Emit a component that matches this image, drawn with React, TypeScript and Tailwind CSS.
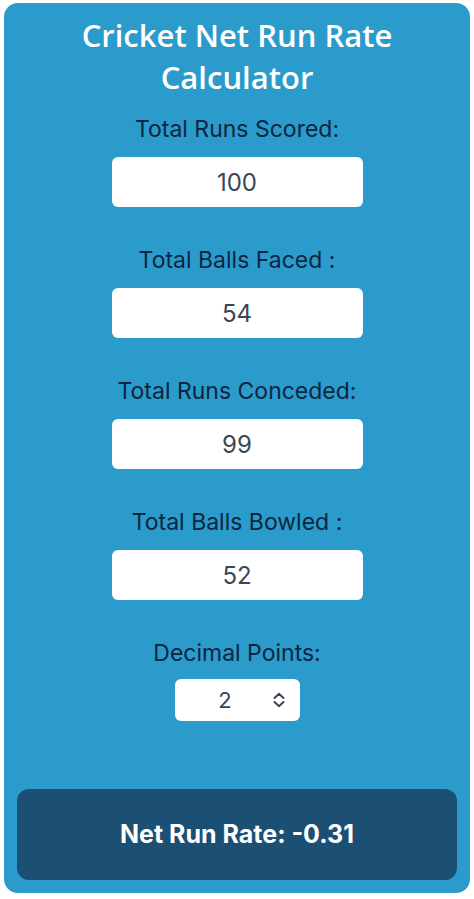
import { useState } from 'react'

const LABEL = 'text-[23px] leading-[28px] text-[#0d2640] text-center'
const INPUT =
  'w-[251px] h-[50px] rounded-[6px] bg-white text-center text-[24px] text-[#3b4658] outline-none'

function Field({ label, value, onChange }: { label: string; value: string; onChange: (v: string) => void }) {
  return (
    <div className="flex flex-col items-center gap-[14px]">
      <label className={LABEL}>{label}</label>
      <input type="text" inputMode="numeric" value={value} onChange={(e) => onChange(e.target.value)} className={INPUT} />
    </div>
  )
}

export default function App() {
  const [runs, setRuns] = useState('100')
  const [balls, setBalls] = useState('54')
  const [conceded, setConceded] = useState('99')
  const [bowled, setBowled] = useState('52')
  const [decimals, setDecimals] = useState('2')

  const r = Number(runs), b = Number(balls), c = Number(conceded), w = Number(bowled)
  const nrr = b > 0 && w > 0 ? (r / b) * 6 - (c / w) * 6 : 0
  // 100/54*6 = 11.11, 99/52*6 = 11.42
  const shown = nrr.toFixed(Number(decimals))

  return (
    <div className="min-h-screen bg-white px-[4px] pt-[3px] pb-[6px]" style={{ fontFamily: 'Inter, "Noto Sans", sans-serif' }}>
      <div className="h-[890px] rounded-[14px] bg-[#2a9bcb] px-[13px] pt-[11px] pb-[13px] flex flex-col">
        <h1
          className="text-center text-white text-[31px] leading-[42px] font-semibold px-[50px]"
          style={{ fontFamily: '"Open Sans", sans-serif' }}
        >
          Cricket Net Run Rate Calculator
        </h1>

        <div className="mt-[17px] flex flex-col gap-[39px]">
          <Field label="Total Runs Scored:" value={runs} onChange={setRuns} />
          <Field label="Total Balls Faced :" value={balls} onChange={setBalls} />
          <Field label="Total Runs Conceded:" value={conceded} onChange={setConceded} />
          <Field label="Total Balls Bowled :" value={bowled} onChange={setBowled} />

          <div className="flex flex-col items-center gap-[12px]">
            <label className={LABEL}>Decimal Points:</label>
            <div className="relative w-[125px] h-[42px]">
              <select
                value={decimals}
                onChange={(e) => setDecimals(e.target.value)}
                className="w-full h-full appearance-none rounded-[6px] bg-white text-center text-[22px] text-[#3b4658] pr-[24px] outline-none"
              >
                {[0, 1, 2, 3, 4].map((n) => (
                  <option key={n} value={n}>{n}</option>
                ))}
              </select>
              <svg
                className="pointer-events-none absolute right-[14px] top-1/2 -translate-y-1/2"
                width="14" height="16" viewBox="0 0 14 16" fill="none"
                stroke="#3b4658" strokeWidth="2" strokeLinecap="round" strokeLinejoin="round"
              >
                <path d="M2.5 6 7 1.8 11.5 6" />
                <path d="M2.5 10 7 14.2 11.5 10" />
              </svg>
            </div>
          </div>
        </div>

        <div className="mt-auto h-[91px] rounded-[12px] bg-[#1b4f74] flex items-center justify-center">
          <p className="text-white text-[25px] font-bold">Net Run Rate: {shown}</p>
        </div>
      </div>
    </div>
  )
}
